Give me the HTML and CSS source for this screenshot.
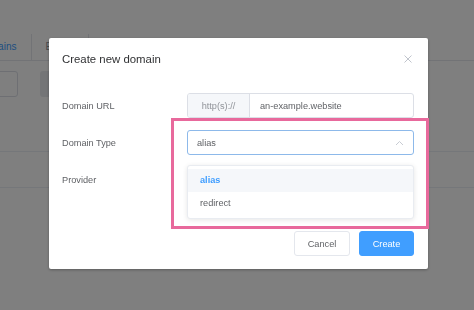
FILE: index.html
```html
<!DOCTYPE html>
<html lang="en">
<head>
    <meta charset="UTF-8">
    <meta name="viewport" content="width=device-width, initial-scale=1.0">
    <title>Create new domain</title>
    <link rel="stylesheet" href="styles.css">
</head>
<body>
    <div class="page">
        <div class="tabs">
            <div class="tab active">Domains</div>
            <div class="tab">Emails</div>
        </div>
        <div class="toolbar">
            <div class="search"></div>
            <div class="tool-btn"></div>
        </div>
        <div class="table">
            <div class="table-row first"></div>
            <div class="table-row"></div>
        </div>
    </div>

    <div class="overlay">
        <div class="dialog">
            <div class="dialog-header">
                <span class="dialog-title">Create new domain</span>
                <svg class="close-icon" width="8" height="8" viewBox="0 0 8 8">
                    <path d="M0.5 0.5L7.5 7.5M7.5 0.5L0.5 7.5" stroke="#c0c4cc" stroke-width="1" fill="none"/>
                </svg>
            </div>

            <div class="dialog-body">
                <div class="form-row">
                    <label class="form-label">Domain URL</label>
                    <div class="input-group">
                        <span class="input-prepend">http(s)://</span>
                        <span class="input-value">an-example.website</span>
                    </div>
                </div>

                <div class="form-row">
                    <label class="form-label">Domain Type</label>
                    <div class="select-wrap">
                        <div class="select is-focus">
                            <span>alias</span>
                            <svg width="9" height="6" viewBox="0 0 9 6">
                                <path d="M1 5L4.5 1.5L8 5" stroke="#c8ccd3" stroke-width="1" fill="none"/>
                            </svg>
                        </div>
                        <ul class="dropdown">
                            <li class="dropdown-item selected">alias</li>
                            <li class="dropdown-item">redirect</li>
                        </ul>
                    </div>
                </div>

                <div class="form-row">
                    <label class="form-label">Provider</label>
                    <div class="select"></div>
                </div>
            </div>

            <div class="dialog-footer">
                <button class="btn btn-cancel">Cancel</button>
                <button class="btn btn-primary">Create</button>
            </div>

            <div class="highlight"></div>
        </div>
    </div>
</body>
</html>
```

FILE: styles.css
```css
* {
    margin: 0;
    padding: 0;
    box-sizing: border-box;
    font-family: 'Liberation Sans', Arial, sans-serif;
}

body {
    width: 474px;
    height: 310px;
    overflow: hidden;
    background: #fff;
}

/* page behind the dialog */
.page {
    padding-top: 34px;
}

.tabs {
    display: flex;
    height: 27px;
    margin-left: -36px;
    border-bottom: 1px solid #e4e7ed;
}

.tab {
    padding: 0 13px;
    line-height: 26px;
    font-size: 10px;
    color: #909399;
    border-right: 1px solid #e4e7ed;
}

.tab.active {
    color: #409eff;
    padding-right: 15px;
}

.toolbar {
    display: flex;
    gap: 22px;
    margin-top: 10px;
    margin-left: -30px;
}

.search {
    width: 48px;
    height: 26px;
    border: 1px solid #dcdfe6;
    border-radius: 3px;
}

.tool-btn {
    width: 60px;
    height: 26px;
    background: #e9ebef;
    border-radius: 3px;
}

.table-row {
    height: 36px;
    border-bottom: 1px solid #ebeef5;
}

.table-row.first {
    height: 55px;
}

/* dialog */
.overlay {
    position: fixed;
    inset: 0;
    background: rgba(0, 0, 0, 0.5);
    display: flex;
    justify-content: center;
    align-items: flex-start;
    padding: 38px 0 0 3px;
}

.dialog {
    position: relative;
    width: 379px;
    height: 231px;
    background: #fff;
    border-radius: 2px;
    box-shadow: 0 1px 3px rgba(0, 0, 0, 0.3);
    padding: 12px 14px 13px 13px;
    display: flex;
    flex-direction: column;
}

.dialog-header {
    display: flex;
    justify-content: space-between;
    align-items: center;
    height: 18px;
}

.dialog-title {
    font-size: 11.4px;
    color: #303133;
}

.close-icon {
    margin-right: 2px;
}

.dialog-body {
    display: flex;
    flex-direction: column;
    gap: 12px;
    margin-top: 25px;
}

.form-row {
    display: flex;
    align-items: center;
}

.form-label {
    width: 125px;
    font-size: 9.2px;
    color: #606266;
}

.input-group {
    flex: 1;
    display: flex;
    height: 25px;
    border: 1px solid #dcdfe6;
    border-radius: 3px;
    font-size: 9.2px;
    overflow: hidden;
}

.input-prepend {
    width: 62px;
    background: #f5f7fa;
    color: #909399;
    border-right: 1px solid #dcdfe6;
    display: flex;
    align-items: center;
    justify-content: center;
}

.input-value {
    display: flex;
    align-items: center;
    padding-left: 10px;
    color: #606266;
}

.select-wrap {
    flex: 1;
    position: relative;
}

.select {
    flex: 1;
    height: 25px;
    border: 1px solid #dcdfe6;
    border-radius: 3px;
    padding: 0 9px;
    display: flex;
    align-items: center;
    justify-content: space-between;
    font-size: 9.2px;
    color: #606266;
}

.select.is-focus {
    border-color: #8db9ea;
}

.dropdown {
    position: absolute;
    top: 35px;
    left: 0;
    right: 0;
    list-style: none;
    background: #fff;
    border: 1px solid #e9ecf1;
    border-radius: 3px;
    box-shadow: 0 1px 5px rgba(0, 0, 0, 0.1);
    padding: 3px 0;
    z-index: 2;
}

.dropdown-item {
    height: 23px;
    line-height: 23px;
    padding-left: 12px;
    font-size: 9.2px;
    color: #606266;
}

.dropdown-item.selected {
    background: #f5f7fa;
    color: #409eff;
    font-weight: bold;
}

.dialog-footer {
    margin-top: auto;
    display: flex;
    justify-content: flex-end;
    gap: 9px;
}

.btn {
    height: 25px;
    border-radius: 3px;
    font-size: 9.2px;
    cursor: pointer;
}

.btn-cancel {
    width: 56px;
    background: #fff;
    border: 1px solid #e4e7ed;
    color: #606266;
}

.btn-primary {
    width: 55px;
    background: #409eff;
    border: 1px solid #409eff;
    color: #fff;
}

/* annotation box drawn over the screenshot */
.highlight {
    position: absolute;
    left: 122px;
    top: 80px;
    width: 258px;
    height: 111px;
    border: 3px solid #e8699c;
    z-index: 3;
    pointer-events: none;
}
```
